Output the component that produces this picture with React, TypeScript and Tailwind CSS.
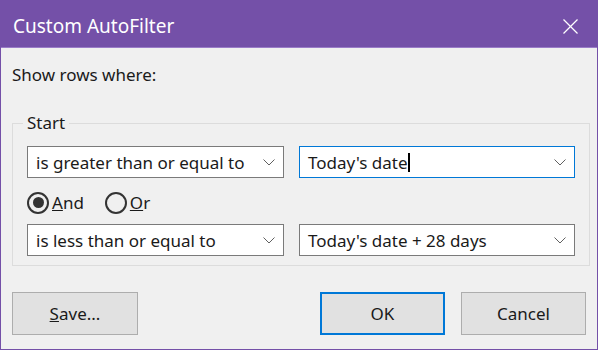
import React from 'react';

const font = { fontFamily: '"Noto Sans", "Open Sans", sans-serif' };

function Chevron() {
  return (
    <svg width="12" height="7" viewBox="0 0 12 7" fill="none" className="shrink-0">
      <polyline points="0.5,0.5 6,6 11.5,0.5" stroke="#606060" strokeWidth="1" />
    </svg>
  );
}

function Combo({ text, width, focused, caret }: { text: string; width: string; focused?: boolean; caret?: boolean }) {
  return (
    <div
      className={`${width} h-[32px] flex items-center justify-between bg-white border pl-[8px] pr-[8px] ${
        focused ? 'border-[#0078d7]' : 'border-[#7a7a7a]'
      }`}
    >
      <span className="flex items-center text-[17px] text-[#1a1a1a] leading-none">
        {text}
        {caret && <span className="inline-block w-[1.5px] h-[19px] bg-black ml-px" />}
      </span>
      <Chevron />
    </div>
  );
}

function Radio({ checked, label }: { checked?: boolean; label: React.ReactNode }) {
  return (
    <div className="flex items-center gap-[3px]">
      <div className="w-[22px] h-[22px] rounded-full border-2 border-[#333] flex items-center justify-center">
        {checked && <div className="w-[11px] h-[11px] rounded-full bg-[#333]" />}
      </div>
      <span className="text-[17px] text-[#1a1a1a]">{label}</span>
    </div>
  );
}

export default function App() {
  return (
    <div className="w-[600px] h-[350px] bg-white" style={font}>
      <div className="w-[598px] h-[350px] border border-[#7450a8] bg-[#f0f0f0] flex flex-col">
        {/* title bar */}
        <div className="h-[47px] bg-[#7450a8] border-b border-[#9a7cc8] flex items-center justify-between pt-[5px] pl-[12px] pr-[19px] shrink-0">
          <span className="text-[19px] text-white">Custom AutoFilter</span>
          <svg width="15" height="15" viewBox="0 0 15 15">
            <line x1="0.5" y1="0.5" x2="14.5" y2="14.5" stroke="white" strokeWidth="1.3" />
            <line x1="14.5" y1="0.5" x2="0.5" y2="14.5" stroke="white" strokeWidth="1.3" />
          </svg>
        </div>

        <div className="px-[11px] pt-[15px] flex flex-col">
          <p className="text-[17px] text-[#1a1a1a] leading-[24px]">Show rows where:</p>

          <fieldset className="mt-[26px] w-[576px] border border-[#dcdcdc] px-[14px] pb-[9px] pt-[13px]">
            <legend className="ml-[-4px] px-[4px] text-[17px] text-[#1a1a1a] leading-[20px]">Start</legend>
            <div className="flex gap-[15px]">
              <Combo text="is greater than or equal to" width="w-[257px]" />
              <Combo text="Today's date" width="w-[276px]" focused caret />
            </div>
            <div className="flex items-center gap-[21px] h-[46px] pt-[3px]">
              <Radio checked label={<><span className="underline">A</span>nd</>} />
              <Radio label={<><span className="underline">O</span>r</>} />
            </div>
            <div className="flex gap-[15px]">
              <Combo text="is less than or equal to" width="w-[257px]" />
              <Combo text="Today's date + 28 days" width="w-[276px]" />
            </div>
          </fieldset>

          <div className="flex mt-[26px]">
            <button className="w-[126px] h-[43px] bg-[#e1e1e1] border border-[#adadad] text-[17px] text-[#1a1a1a]">
              <span className="underline">S</span>ave...
            </button>
            <button className="ml-auto w-[125px] h-[43px] bg-[#e1e1e1] border-2 border-[#0078d7] text-[17px] text-[#1a1a1a]">
              OK
            </button>
            <button className="ml-[16px] w-[125px] h-[43px] bg-[#e1e1e1] border border-[#adadad] text-[17px] text-[#1a1a1a]">
              Cancel
            </button>
          </div>
        </div>
      </div>
    </div>
  );
}
